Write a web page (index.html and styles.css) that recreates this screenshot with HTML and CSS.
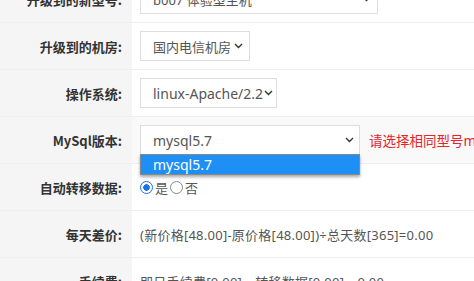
FILE: index.html
```html
<!DOCTYPE html>
<html lang="zh-CN">
<head>
<meta charset="utf-8">
<link rel="stylesheet" href="styles.css">
</head>
<body>
<div class="form">
  <div class="row">
    <div class="label">升级到的新型号:</div>
    <div class="value">
      <div class="select w1 cjk"><span>b007 体验型主机</span><svg class="chev" width="9" height="6" viewBox="0 0 9 6"><path d="M1 1l3.5 3.5L8 1" fill="none" stroke="#333" stroke-width="1.4"/></svg></div>
    </div>
  </div>
  <div class="row">
    <div class="label">升级到的机房:</div>
    <div class="value">
      <div class="select w2 cjk"><span>国内电信机房</span><svg class="chev" width="9" height="6" viewBox="0 0 9 6"><path d="M1 1l3.5 3.5L8 1" fill="none" stroke="#333" stroke-width="1.4"/></svg></div>
    </div>
  </div>
  <div class="row">
    <div class="label">操作系统:</div>
    <div class="value">
      <div class="select w3"><span>linux-Apache/2.2</span><svg class="chev" width="9" height="6" viewBox="0 0 9 6"><path d="M1 1l3.5 3.5L8 1" fill="none" stroke="#333" stroke-width="1.4"/></svg></div>
    </div>
  </div>
  <div class="row hover">
    <div class="label">MySql版本:</div>
    <div class="value">
      <div class="select-wrap">
        <div class="select w4"><span>mysql5.7</span><svg class="chev" width="9" height="6" viewBox="0 0 9 6"><path d="M1 1l3.5 3.5L8 1" fill="none" stroke="#333" stroke-width="1.4"/></svg></div>
        <div class="dropdown"><div class="option">mysql5.7</div></div>
      </div>
      <span class="hint">请选择相同型号mysql版本</span>
    </div>
  </div>
  <div class="row">
    <div class="label">自动转移数据:</div>
    <div class="value">
      <label class="radio"><input type="radio" name="move" checked>是</label>
      <label class="radio"><input type="radio" name="move">否</label>
    </div>
  </div>
  <div class="row">
    <div class="label">每天差价:</div>
    <div class="value text">(新价格[48.00]-原价格[48.00])÷总天数[365]=0.00</div>
  </div>
  <div class="row">
    <div class="label">手续费:</div>
    <div class="value text">即日手续费[0.00]，转移数据[0.00]，0.00</div>
  </div>
</div>
</body>
</html>
```
FILE: styles.css
```css
html, body {
  margin: 0;
  padding: 0;
  background: #fff;
  overflow: hidden;
}
body {
  font-family: "Noto Sans", "Noto Sans CJK SC", sans-serif;
  font-size: 13px;
  color: #555;
}
.form {
  margin-top: -24px;
  display: flex;
  flex-direction: column;
}
.row {
  display: flex;
  height: 46px;
  border-bottom: 1px solid #eee;
}
.label {
  width: 132px;
  flex: none;
  box-sizing: border-box;
  background: #f5f5f5;
  padding-right: 10px;
  display: flex;
  align-items: center;
  justify-content: flex-end;
  font-weight: bold;
  color: #333;
  font-family: "Noto Sans CJK SC", sans-serif;
  font-size: 13px;
}
.value {
  flex: 1;
  display: flex;
  align-items: center;
  padding-left: 8px;
  white-space: nowrap;
  min-width: 0;
}
.row.hover .value {
  background: #f9f9f9;
}
.text {
  padding-left: 8px;
  font-size: 13px;
  letter-spacing: 0.25px;
  color: #555;
}
.select {
  box-sizing: border-box;
  height: 30px;
  border: 1px solid #ddd;
  background: #fff;
  display: flex;
  align-items: center;
  justify-content: space-between;
  padding: 0 6px 0 12px;
  font-size: 14px;
  color: #555;
}
.select.cjk {
  font-size: 13px;
}
.w1 { width: 238px; }
.w2 { width: 110px; }
.w3 { width: 137px; padding-right: 3px; }
.w4 { width: 220px; padding-right: 5px; }
.chev { flex: none; }
.select-wrap {
  position: relative;
}
.dropdown {
  position: absolute;
  left: 0;
  top: 29px;
  width: 220px;
  box-sizing: border-box;
  border: 1px solid #888;
  background: #1e8ff5;
  box-shadow: 0 2px 3px rgba(0, 0, 0, 0.35);
  z-index: 2;
}
.option {
  height: 19px;
  line-height: 19px;
  padding-left: 12px;
  color: #fff;
  font-size: 14px;
}
.hint {
  margin-left: 9px;
  color: #e8232a;
  font-size: 13.5px;
}
.radio {
  display: flex;
  align-items: center;
  font-size: 13px;
  color: #555;
}
.radio input {
  appearance: none;
  -webkit-appearance: none;
  margin: 0 2px 0 0;
  width: 13px;
  height: 13px;
  border: 1px solid #888;
  border-radius: 50%;
  box-sizing: border-box;
  background: #fff;
}
.radio input:checked {
  border-color: #1a73e8;
  background: radial-gradient(circle, #1a73e8 0 3px, #fff 3.5px);
}
.radio + .radio {
  margin-left: 2px;
}
```
